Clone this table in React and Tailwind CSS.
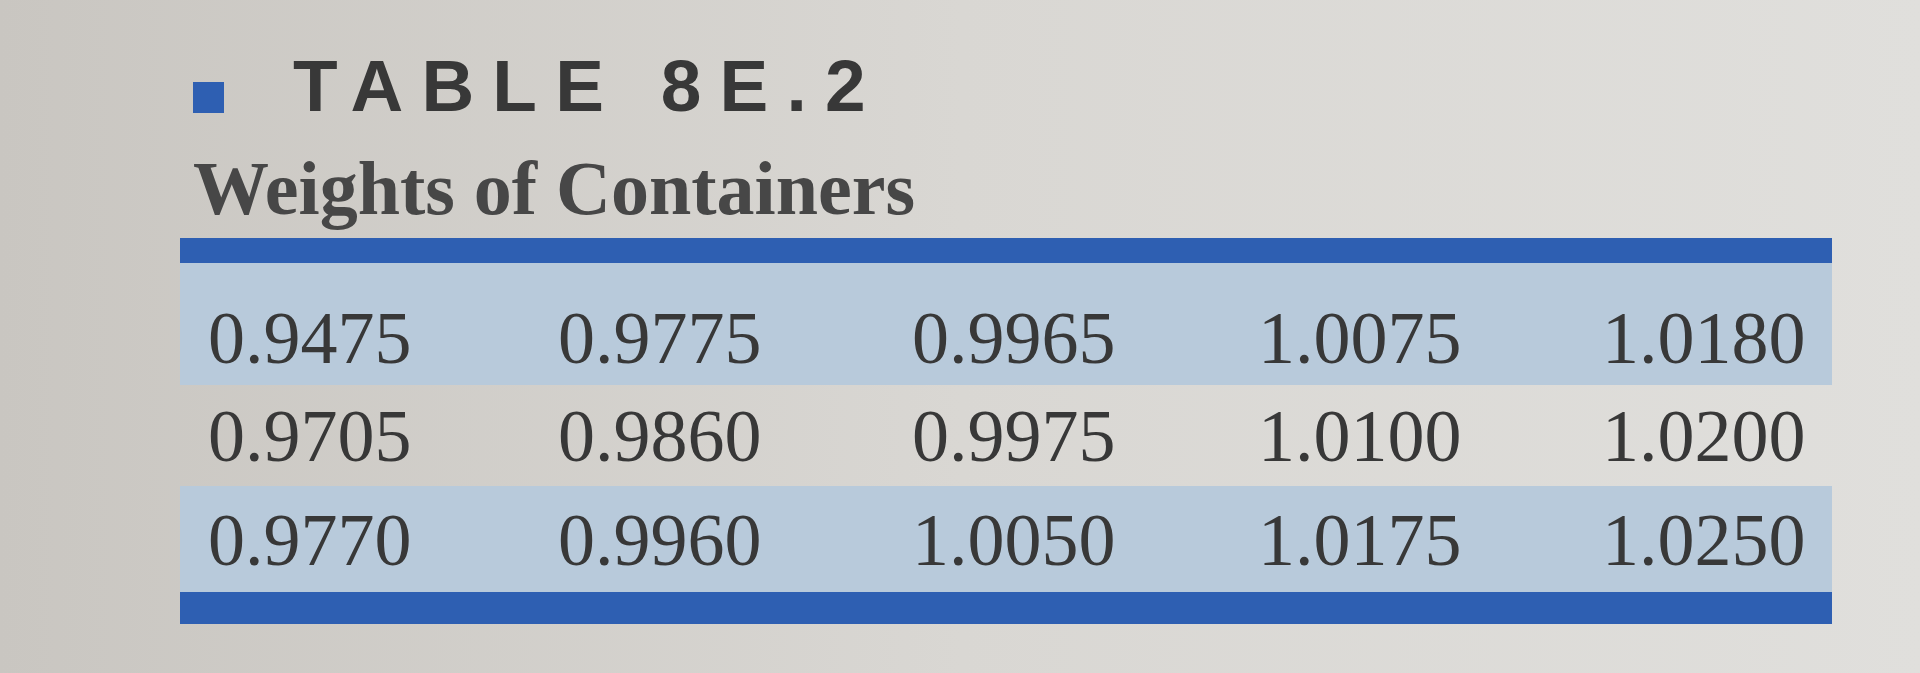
import React from 'react';

const rows = [
  { vals: ['0.9475', '0.9775', '0.9965', '1.0075', '1.0180'], shaded: true, cls: 'h-[122px] pt-[38px]' },
  { vals: ['0.9705', '0.9860', '0.9975', '1.0100', '1.0200'], shaded: false, cls: 'h-[101px] pt-[14px]' },
  { vals: ['0.9770', '0.9960', '1.0050', '1.0175', '1.0250'], shaded: true, cls: 'h-[106px] pt-[17px]' },
];

const App = () => (
  <div className="w-full h-[673px] overflow-hidden bg-linear-to-r from-[#c9c6c1] via-[#d9d7d3] to-[#e0dfdc] pl-[180px] pt-[49px]">
    {/* heading */}
    <div className="flex items-start pl-[13px]">
      <div className="w-[31px] h-[31px] mt-[33px] bg-[#2e5fb2]" />
      <div
        className="ml-[69px] text-[73px] leading-none font-bold tracking-[0.25em] text-[#383838]"
        style={{ fontFamily: '"Liberation Sans", Arial, sans-serif' }}
      >
        TABLE 8E.2
      </div>
    </div>
    <div
      className="pl-[13px] mt-[28px] text-[76px] leading-none font-bold text-[#474747]"
      style={{ fontFamily: '"Liberation Serif", "Times New Roman", serif' }}
    >
      Weights of Containers
    </div>

    {/* table */}
    <div className="w-[1652px] mt-[12px]">
      <div className="h-[25px] bg-[#2e5fb2]" />
      {rows.map((r, i) => (
        <div
          key={i}
          className={`grid grid-cols-[350px_354px_346px_344px_auto] pl-[28px] ${r.cls} ${r.shaded ? 'bg-[#b8cadb]' : ''}`}
        >
          {r.vals.map(v => (
            <div
              key={v}
              className="text-[74px] leading-none text-[#383838]"
              style={{ fontFamily: '"Liberation Serif", "Times New Roman", serif' }}
            >
              {v}
            </div>
          ))}
        </div>
      ))}
      <div className="h-[32px] bg-[#2e5fb2]" />
    </div>
  </div>
);

export default App;
